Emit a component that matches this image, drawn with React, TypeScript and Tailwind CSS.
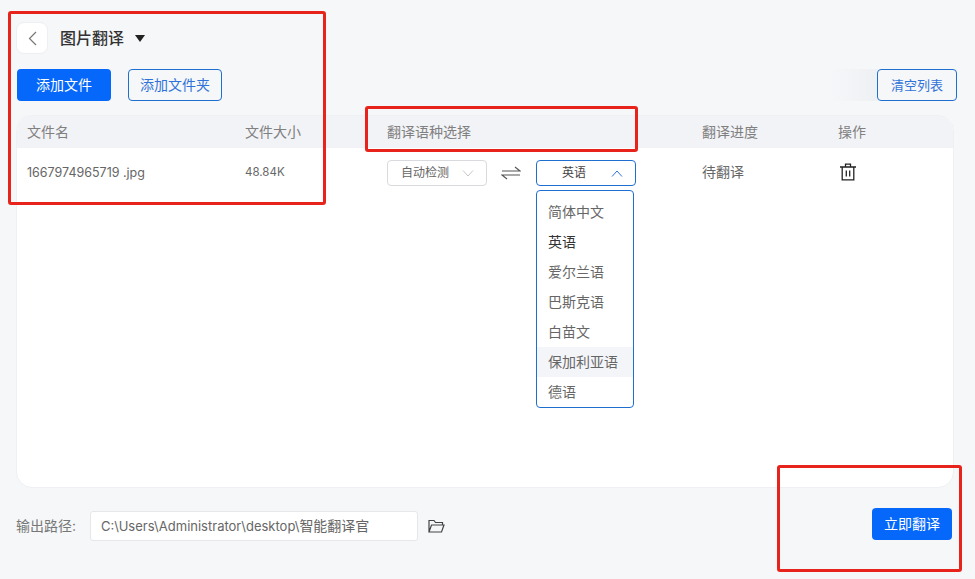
import React from "react";

const font = { fontFamily: '"Inter", "Noto Sans CJK SC", sans-serif' };

function Chevron({ up, className }: { up?: boolean; className: string }) {
  return (
    <svg width="12" height="7" viewBox="0 0 12 7" fill="none" stroke="currentColor" strokeWidth="1" className={className}>
      <path d={up ? "M1 6.5L6 1l5 5.5" : "M1 .5L6 6l5-5.5"} />
    </svg>
  );
}

function Frame({ className }: { className: string }) {
  return <div className={`absolute rounded-[3px] border-[3px] border-[#e8231b] ${className}`} />;
}

const languages = ["简体中文", "英语", "爱尔兰语", "巴斯克语", "白苗文", "保加利亚语", "德语"];

export default function App() {
  return (
    <div style={font} className="relative flex h-[579px] w-[975px] flex-col overflow-hidden bg-[#f6f7f9] px-4 pt-[22px] text-sm text-[#666]">
      <div className="flex h-8 items-center">
        <button className="flex h-8 w-8 items-center justify-center rounded-lg border border-[#eeeff2] bg-white text-[#777]">
          <svg width="9" height="15" viewBox="0 0 9 15" fill="none" stroke="currentColor" strokeWidth="1.2">
            <path d="M8 1L1.5 7.5 8 14" />
          </svg>
        </button>
        <span className="ml-3 text-base font-medium leading-none text-[#333]">图片翻译</span>
        <span className="ml-[11px] h-0 w-0 border-x-[5.5px] border-t-[7px] border-x-transparent border-t-[#222]" />
      </div>

      <div className="mt-[15px] flex h-8 items-center pl-px pr-[2px]">
        <button className="h-8 w-[94px] rounded bg-[#0667fb] text-sm text-white">添加文件</button>
        <button className="ml-[17px] h-8 w-[94px] rounded border border-[#1f6fd0] text-sm text-[#2f73d8]">添加文件夹</button>
        <div className="ml-auto h-8 w-[47px] bg-gradient-to-r from-[#f6f7f9] to-[#eff0f3]" />
        <button className="h-8 w-20 rounded border border-[#1f6fd0] text-[13px] text-[#2f73d8]">清空列表</button>
      </div>

      <div className="mt-[14px] flex h-[373px] w-[938px] flex-col overflow-hidden rounded-2xl border border-[#eef0f3] bg-white">
        <div className="flex h-[32px] shrink-0 items-center bg-[#f2f3f7] pl-[10px] text-[#808080]">
          <span className="w-[218px]">文件名</span>
          <span className="w-[142px]">文件大小</span>
          <span className="w-[315px]">翻译语种选择</span>
          <span className="w-[136px]">翻译进度</span>
          <span>操作</span>
        </div>
        <div className="flex h-[50px] items-center pl-[10px] text-xs">
          <span className="w-[218px] text-[12.5px] text-[#666]">1667974965719 .jpg</span>
          <span className="w-[142px] text-[11.5px] text-[#666]">48.84K</span>
          <div className="flex w-[315px] items-center">
            <div className="flex h-[26px] w-[100px] items-center rounded border border-[#d9dade] pl-[13px] pr-3 text-[#666]">
              <span>自动检测</span>
              <Chevron className="ml-auto text-[#c4c6cc]" />
            </div>
            <svg width="20" height="14" viewBox="0 0 20 14" fill="none" stroke="#555" strokeWidth="1.1" className="ml-[14px]">
              <path d="M1 5h18L14 1M19 9H1l5 4" />
            </svg>
            <div className="relative ml-[15px] flex h-[26px] w-[100px] items-center rounded border border-[#1f6fd0] pl-[25px] pr-3 text-[#444]">
              <span>英语</span>
              <Chevron up className="ml-auto text-[#2f73d8]" />
              <div className="absolute left-[-1px] top-[29px] z-10 h-[218px] w-[98px] rounded border border-[#1f6fd0] bg-white py-[6px] text-sm">
                {languages.map((l, i) => (
                  <div
                    key={l}
                    className={`flex h-[30px] items-center pl-[11px] ${i === 1 ? "text-[#333]" : "text-[#666]"} ${i === 5 ? "bg-[#f4f5f8]" : ""}`}
                  >
                    {l}
                  </div>
                ))}
              </div>
            </div>
          </div>
          <span className="mb-[2px] w-[136px] text-sm text-[#666]">待翻译</span>
          <svg width="16" height="18" viewBox="0 0 16 18" fill="none" stroke="#222" strokeWidth="1.3" className="mb-[2px] ml-[2px]">
            <path d="M0 4h16M5.5 4V1.2h5V4M2.2 4v12.8h11.6V4M6.3 7.5v6M9.7 7.5v6" />
          </svg>
        </div>
      </div>

      <div className="mt-[20px] flex items-center">
        <span className="w-[74px] text-sm text-[#777]">输出路径:</span>
        <div className="flex h-[30px] w-[328px] items-center rounded-[3px] border border-[#e6e7ea] bg-white pl-[10px] text-[13px] text-[#666]">
          C:\Users\Administrator\desktop\<span className="text-sm">智能翻译官</span>
        </div>
        <svg width="17" height="14" viewBox="0 0 17 14" fill="none" stroke="#444" strokeWidth="1.2" className="ml-[10px]">
          <path d="M1 13V1.5h5l1.5 2H14.5V6M1 13h12.5L16 6H3.5L1 13Z" />
        </svg>
        <button className="mb-1 ml-auto mr-[7px] h-8 w-20 rounded bg-[#0667fb] text-sm text-white">立即翻译</button>
      </div>

      <Frame className="left-[8px] top-[11px] h-[194px] w-[318px]" />
      <Frame className="left-[365px] top-[106px] h-[46px] w-[273px]" />
      <Frame className="left-[777px] top-[465px] h-[107px] w-[185px]" />
    </div>
  );
}
